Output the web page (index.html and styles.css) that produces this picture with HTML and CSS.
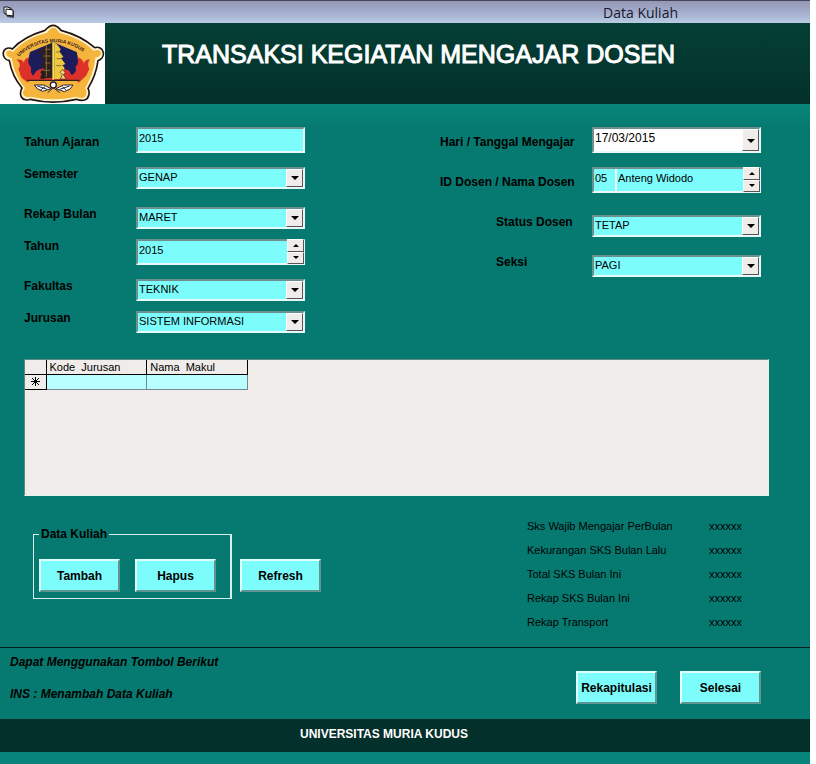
FILE: index.html
```html
<!DOCTYPE html>
<html lang="id">
<head>
  <meta charset="UTF-8" />
  <meta name="viewport" content="width=device-width, initial-scale=1.0"/>
  <title>Data Kuliah</title>
  <link rel="stylesheet" href="styles.css">
</head>
<body>
  <div class="window">
    <div class="titlebar">
      <svg class="form-icon" viewBox="0 0 12 12" width="12" height="12" aria-hidden="true">
        <path d="M4 4L11 5V12L4 11Z" fill="#445"/>
        <path d="M1 1H5L6 2H8V8H3L1 7Z" fill="#fff" stroke="#111" stroke-width="1"/>
        <path d="M3 3L10 4V10L3 9Z" fill="#fff" stroke="#111" stroke-width="1"/>
      </svg>
      <span class="caption">Data Kuliah</span>
    </div>

    <header class="header">
      <svg class="logo" viewBox="0 9 315 243" width="105" height="81" role="img" aria-label="Universitas Muria Kudus">
        <path d="M160 16C171 16 176 23 183 31C224 42 258 59 284 83C295 79 308 85 310 97C312 110 303 119 294 122C290 153 279 181 264 205C270 216 268 236 254 240C245 243 237 241 229 238C186 248 132 248 91 238C83 242 69 240 64 231C59 220 62 211 66 204C45 179 33 151 28 122C16 120 8 110 10 97C13 84 28 81 37 87C62 59 98 42 135 31C142 23 148 16 160 16Z" fill="#fff4cf" stroke="#241512" stroke-width="5"/>
        <path d="M160 23C169 23 173 31 178 38C219 48 256 66 281 92C292 87 303 91 303 99C302 109 292 112 286 113C283 148 270 179 256 204C262 215 261 230 250 233C243 235 235 232 228 230C186 240 134 240 92 230C84 233 74 231 70 224C67 216 71 209 75 204C54 179 40 149 35 114C26 113 18 107 19 99C21 89 33 90 39 96C65 66 100 48 141 38C147 31 151 23 160 23Z" fill="#f5b53c"/>
        <path d="M160 67L230 96L242 150L235 183H88L77 150L90 96Z" fill="#1c1b5c"/>
        <path d="M50 119C62 117 68 121 72 128C73 117 80 112 87 113C81 126 88 134 94 144C91 153 93 159 99 167L109 153L119 148L133 145L139 158L146 146L160 154L174 146L185 158L193 147L206 151L216 166C226 158 231 151 226 141C234 132 237 123 231 113C239 112 248 117 251 129C256 121 262 118 270 118C262 128 264 139 268 147C263 156 261 167 251 174L238 187H82L68 176C58 166 60 155 55 147C62 137 61 128 50 119Z" fill="#dc3028"/>
        <path d="M160 66L119 93L111 103L132 99L117 120L136 117L122 141L132 145L120 174H160Z" fill="#2b201d"/>
        <path d="M163 66L173 76L182 88L178 94L190 111L183 115L196 132L187 136L194 144L188 155L193 177H163Z" fill="#efc93c"/>
        <path d="M135 88H151M130 108H152M135 129H151M129 151H150M139 76V170" stroke="#8b6a31" stroke-width="3"/>
        <path d="M169 96H178M170 116H183M169 137H184" stroke="#8d6926" stroke-width="3"/>
        <path d="M160 59V183" stroke="#f4dc62" stroke-width="6"/>
        <path d="M126 150L136 157L129 164L136 176H121L127 165L121 157Z" fill="#231e19"/>
        <path d="M187 149L196 157L190 164L199 177H181L187 164L180 157Z" fill="#f1d184" stroke="#4b241a" stroke-width="2"/>
        <path d="M83 181H236L220 202L207 216L179 203H142L111 216L96 200Z" fill="#f5b53c"/>
        <path d="M82 181H238" stroke="#32201d" stroke-width="4"/>
        <path d="M103 195L132 195L153 206L128 214L113 207ZM219 195L190 195L168 206L193 215L210 207Z" fill="#fff" stroke="#252036" stroke-width="3"/>
        <path d="M112 198L142 208M121 211L135 200M209 198L179 208M199 211L187 200M143 218L160 203L179 218" fill="none" stroke="#252036" stroke-width="3"/>
        <circle cx="160" cy="195" r="9" fill="#fff" stroke="#252036" stroke-width="4"/>
        <path id="logo-arc" d="M56 110Q103 67 160 67Q220 67 270 112" fill="none"/>
        <text class="logo-text"><textPath href="#logo-arc">UNIVERSITAS MURIA KUDUS</textPath></text>
      </svg>
      <h1>TRANSAKSI KEGIATAN MENGAJAR DOSEN</h1>
    </header>

    <form class="content">
      <div class="fields">
        <div class="column">
          <div class="row low">
            <label for="tahunAjaran">Tahun Ajaran</label>
            <div class="field tall"><input type="text" id="tahunAjaran" value="2015"></div>
          </div>
          <div class="row">
            <label for="semester">Semester</label>
            <div class="field">
              <select id="semester"><option>GENAP</option><option>GANJIL</option></select>
              <span class="arrow"></span>
            </div>
          </div>
          <div class="row short">
            <label for="rekapBulan">Rekap Bulan</label>
            <div class="field">
              <select id="rekapBulan"><option>MARET</option><option>APRIL</option></select>
              <span class="arrow"></span>
            </div>
          </div>
          <div class="row">
            <label for="tahun">Tahun</label>
            <div class="field tall">
              <input type="text" id="tahun" value="2015">
              <div class="spin">
                <button type="button" class="up" aria-label="Tahun naik"></button>
                <button type="button" class="down" aria-label="Tahun turun"></button>
              </div>
            </div>
          </div>
          <div class="row short">
            <label for="fakultas">Fakultas</label>
            <div class="field">
              <select id="fakultas"><option>TEKNIK</option><option>EKONOMI</option></select>
              <span class="arrow"></span>
            </div>
          </div>
          <div class="row last">
            <label for="jurusan">Jurusan</label>
            <div class="field">
              <select id="jurusan"><option>SISTEM INFORMASI</option></select>
              <span class="arrow"></span>
            </div>
          </div>
        </div>

        <div class="column right">
          <div class="row low">
            <label for="tanggal">Hari / Tanggal Mengajar</label>
            <div class="field tall date">
              <select id="tanggal"><option>17/03/2015</option></select>
              <span class="arrow"></span>
            </div>
          </div>
          <div class="row low long">
            <label for="namaDosen">ID Dosen / Nama Dosen</label>
            <div class="field tall">
              <input type="text" id="idDosen" class="id" value="05" aria-label="ID Dosen">
              <input type="text" id="namaDosen" value="Anteng Widodo">
              <div class="spin">
                <button type="button" class="up" aria-label="Dosen sebelumnya"></button>
                <button type="button" class="down" aria-label="Dosen berikutnya"></button>
              </div>
            </div>
          </div>
          <div class="row indent">
            <label for="statusDosen">Status Dosen</label>
            <div class="field">
              <select id="statusDosen"><option>TETAP</option></select>
              <span class="arrow"></span>
            </div>
          </div>
          <div class="row indent">
            <label for="seksi">Seksi</label>
            <div class="field">
              <select id="seksi"><option>PAGI</option><option>SORE</option></select>
              <span class="arrow"></span>
            </div>
          </div>
        </div>
      </div>

      <div class="grid-panel">
        <table>
          <thead>
            <tr><th class="marker"></th><th>Kode&nbsp; Jurusan</th><th>Nama&nbsp; Makul</th></tr>
          </thead>
          <tbody>
            <tr>
              <td class="marker">
                <svg viewBox="0 0 18 18" width="9" height="9" aria-hidden="true"><path d="M9 0V18M0 9H18M2 2L16 16M16 2L2 16" stroke="#000" stroke-width="2"/></svg>
              </td>
              <td></td><td></td>
            </tr>
          </tbody>
        </table>
      </div>

      <div class="lower">
        <div class="actions">
          <fieldset>
            <legend>Data Kuliah</legend>
            <button type="button" class="btn">Tambah</button>
            <button type="button" class="btn">Hapus</button>
          </fieldset>
          <button type="button" class="btn">Refresh</button>
        </div>
        <dl class="summary">
          <dt>Sks Wajib Mengajar PerBulan</dt><dd>xxxxxx</dd>
          <dt>Kekurangan SKS Bulan Lalu</dt><dd>xxxxxx</dd>
          <dt>Total SKS Bulan Ini</dt><dd>xxxxxx</dd>
          <dt>Rekap SKS Bulan Ini</dt><dd>xxxxxx</dd>
          <dt>Rekap Transport</dt><dd>xxxxxx</dd>
        </dl>
      </div>

      <div class="bottom">
        <div class="hints">
          <p>Dapat Menggunakan Tombol Berikut</p>
          <p>INS : Menambah Data Kuliah</p>
        </div>
        <div class="bottom-buttons">
          <button type="button" class="btn">Rekapitulasi</button>
          <button type="button" class="btn">Selesai</button>
        </div>
      </div>
    </form>

    <footer>UNIVERSITAS MURIA KUDUS</footer>
  </div>
</body>
</html>
```
FILE: styles.css
```css
* { box-sizing: border-box; }
body {
  font-family: "Liberation Sans", Arial, sans-serif; font-size: 11px;
  color: #000; background: #fff; margin: 0;
}
.window {
  margin-right: 6px; padding-bottom: 13px; background: #08857a;
}

/* title bar */
.titlebar {
  display: flex; align-items: center; justify-content: space-between;
  height: 23px; padding: 0 132px 0 3px;
  border-top: 1px solid #44455c;
  background: linear-gradient(#9498b4, #a3accd 50%, #b9cce4);
}
.caption { font-family: "Open Sans", sans-serif; font-size: 14px; color: #181828; }

.header {
  display: flex; align-items: flex-start; height: 81px;
  background: linear-gradient(#043f35, #03302a);
}
.logo { background: #fff; flex: none; }
.logo-text { font-size: 15px; font-weight: bold; fill: #3c2018; }
h1 {
  flex: 1; margin: 17px 0 0; padding-left: 57px;
  font-size: 25px; line-height: 28px; font-weight: normal;
  color: #fff; -webkit-text-stroke: 1px #fff;
}

/* input fields */
.content { background: linear-gradient(#08857a, #067a70 24px); }
.fields {
  display: flex; justify-content: space-between;
  padding: 23px 49px 26px 24px;
}
.row { display: flex; height: 40px; }
.row.short { height: 32px; }
.row.long { height: 48px; }
.row.last { height: 22px; }
label { width: 112px; font-size: 12px; line-height: 14px; font-weight: bold; }
.right label { width: 152px; }
.low label { padding-top: 8px; }
.indent label { padding-left: 56px; }
.field {
  position: relative; display: flex; width: 169px; height: 22px;
  border: 2px solid; border-color: #6d8f8d #e6fafa #e6fafa #6d8f8d;
  background: #7dfcfc;
}
.field.tall { height: 26px; }
.date, .date select { background: #fff; }
.date select { font-size: 12px; }
input, select {
  appearance: none; flex: 1; min-width: 0; margin: 0; padding: 0 1px 2px;
  border: none; border-radius: 0; outline: none;
  font-family: inherit; font-size: 11px; color: #000; background: #7dfcfc;
}
.tall input, .tall select { padding-bottom: 5px; }
input.id { flex: none; width: 23px; border-right: 2px solid #e6fafa; }
.arrow {
  position: absolute; top: 0; right: 0; bottom: 0; width: 17px;
  border: 1px solid; border-color: #fff #5c5250 #5c5250 #fff;
  background: #efecea; pointer-events: none;
}
.arrow::after, .up::after, .down::after {
  content: ""; display: block; width: 0; margin: 6px auto 0;
  border: 4px solid transparent; border-top-color: #000; border-bottom: none;
}
.tall .arrow::after { margin-top: 9px; }
.spin { display: flex; flex-direction: column; width: 17px; margin: -2px -1px -1px 0; }
.spin button {
  flex: 1; padding: 0; background: #efecea;
  border: 1px solid; border-color: #fff #5c5250 #5c5250 #fff;
}
.up::after, .down::after { margin-top: 0; border-width: 3px; border-bottom: none; }
.up::after { border: 3px solid transparent; border-bottom-color: #000; border-top: none; }

/* course table */
.grid-panel {
  height: 137px; margin: 0 41px 0 24px; background: #efecea;
  border: 1px solid; border-color: #5d8984 #e4f2ee #e4f2ee #5d8984;
}
table { border-collapse: collapse; table-layout: fixed; width: 223px; }
th, td { height: 14px; padding: 0 3px; }
th {
  font-weight: normal; text-align: left; line-height: 14px;
  border-right: 1px solid #000; border-bottom: 1px solid #000;
}
td { height: 15px; background: #b8ffff; border-right: 1px solid #789; border-bottom: 1px solid #789; }
.marker { width: 21px; text-align: center; line-height: 9px; }
td.marker { background: #efecea; border-color: #000; }

.lower {
  display: flex; justify-content: space-between;
  padding: 18px 68px 13px 33px;
}
.actions { display: flex; align-items: flex-start; gap: 8px; padding-top: 13px; }
fieldset {
  display: flex; gap: 15px; margin: 0; padding: 18px 14px 6px 5px;
  border: 2px solid #d8f0ec; border-width: 1px 2px 1px 1px;
}
legend { padding: 0 2px; font-size: 12px; line-height: 14px; font-weight: bold; }
.actions > .btn { margin-top: 32px; }
.btn {
  width: 81px; height: 33px; padding: 0;
  border: 2px solid; border-color: #e0ffff #5f9490 #5f9490 #e0ffff;
  font-family: inherit; font-size: 12px; font-weight: bold;
  color: #000; background: #7dfcfc;
}
.summary {
  display: grid; grid-template-columns: 182px auto;
  margin: 0; line-height: 24px;
}
dd { margin: 0; }

/* shortcuts and closing buttons */
.bottom {
  display: flex; justify-content: space-between; align-items: flex-start;
  height: 72px; padding: 0 49px 0 10px; border-top: 1px solid #021f1d;
}
.hints { padding-top: 7px; font-size: 12px; font-weight: bold; font-style: italic; }
.hints p { margin: 0 0 18px; line-height: 14px; }
.bottom-buttons { display: flex; gap: 23px; padding-top: 23px; }
footer {
  padding-right: 42px; line-height: 30px; height: 33px;
  text-align: center; font-size: 12px; font-weight: bold;
  color: #fff; background: #03302a;
}
```
